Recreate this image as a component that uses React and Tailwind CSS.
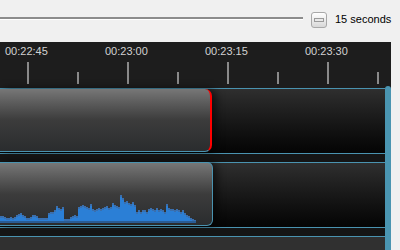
const wave = [
  5, 5, 4, 3, 3, 4, 3, 4, 6, 7, 8, 6, 5, 3, 3, 4, 6, 6, 5, 3,
  3, 3, 3, 3, 8, 9, 9, 10, 14, 12, 11, 13, 2, 2, 2, 4, 5, 6, 5, 13,
  14, 15, 14, 13, 12, 16, 11, 10, 11, 12, 11, 12, 13, 14, 12, 13, 17, 15, 14, 13,
  25, 22, 18, 19, 17, 16, 18, 15, 9, 10, 9, 10, 10, 9, 11, 12, 11, 10, 12, 10,
  11, 10, 9, 16, 12, 11, 11, 10, 11, 10, 9, 10, 8, 6, 5, 3, 2, 1,
];

const WaveForm = () => {
  const h = 32;
  return (
    <svg width="200" height={h} className="block">
      {wave.map((v, i) => {
        const bh = Math.round(v * 1.05);
        return (
          <g key={i}>
            <rect x={i * 2} y={h - 4 - bh} width="2" height={bh} fill="#2b7fd6" />
            <rect x={i * 2} y={h - 4 - bh} width="2" height={Math.min(2, bh)} fill="#3a6fae" />
          </g>
        );
      })}
      <rect x="0" y={h - 4} width="196" height="2" fill="#2a5c94" />
    </svg>
  );
};

const Ruler = () => {
  const labels = ["00:22:45", "00:23:00", "00:23:15", "00:23:30"];
  return (
    <div className="h-[46px] bg-[#1d1d1d]">
      <div className="flex pl-[5px] pt-[3px] text-[11px] leading-[13px] text-[#d2d2d2]">
        {labels.map((l) => (
          <div key={l} className="w-[100px] shrink-0">
            {l}
          </div>
        ))}
      </div>
      <div className="flex items-end pl-[27px] mt-[4px] h-[22px]">
        {labels.map((l) => (
          <div key={l} className="flex items-end w-[100px] shrink-0">
            <div className="w-[2px] h-[22px] bg-[#8a8a8a]" />
            <div className="w-[48px]" />
            <div className="w-[2px] h-[12px] bg-[#8a8a8a]" />
            <div className="w-[48px]" />
          </div>
        ))}
      </div>
    </div>
  );
}

export default function App() {
  return (
    <div
      className="w-[400px] h-[250px] overflow-hidden bg-[#f0f0f0]"
      style={{ fontFamily: '"Liberation Sans", Arial, sans-serif' }}
    >
      {/* zoom slider */}
      <div className="h-[42px] flex items-start">
        <div className="w-[303px] mt-[17px] h-[3px] border-t-2 border-[#8c8c8c] bg-white" />
        <div className="ml-[8px] mt-[12px] w-[16px] h-[16px] rounded-[3px] border border-[#a8a8a8] bg-gradient-to-b from-white to-[#d8d8d8] flex items-center justify-center">
          <div className="w-[10px] h-[4px] border border-[#9a9a9a] bg-[#e8e8e8]" />
        </div>
        <div className="ml-[8px] mt-[13px] text-[11px] leading-[13px] text-black">15 seconds</div>
      </div>

      {/* timeline */}
      <div className="w-[391px] h-[208px] bg-[#151515]">
        <Ruler />
        <div className="flex">
          <div className="w-[385px]">
            {/* track 1 */}
            <div className="h-[66px] border-y border-[#4a93b0] bg-gradient-to-b from-[#2f2f2f] to-[#050505]">
              <div className="w-[212px] h-[63px] border-b border-[#4a93b0] border-r-2 border-r-[#ff0000] rounded-r-[7px] bg-gradient-to-b from-[#777777] via-[#3c3c3c] to-[#2a2c2e] shadow-[4px_0_8px_rgba(0,0,0,0.6)]" />
            </div>
            <div className="h-[8px] bg-[#151515]" />
            {/* track 2 */}
            <div className="h-[66px] border-y border-[#4a93b0] bg-gradient-to-b from-[#2f2f2f] to-[#050505]">
              <div className="-mt-px w-[213px] h-[64px] border border-l-0 border-[#4a93b0] rounded-r-[6px] bg-gradient-to-b from-[#777777] via-[#3c3c3c] to-[#2a2c2e] shadow-[4px_0_8px_rgba(0,0,0,0.6)] flex flex-col justify-end overflow-hidden">
                <WaveForm />
              </div>
            </div>
            <div className="h-[8px] bg-[#151515]" />
            {/* track 3 */}
            <div className="h-[20px] border-t border-[#4a93b0] bg-[#303030]" />
          </div>
          <div className="w-[6px] mt-[-2px] rounded-t-[3px] bg-[#4a95b1]" />
        </div>
      </div>
    </div>
  );
}
